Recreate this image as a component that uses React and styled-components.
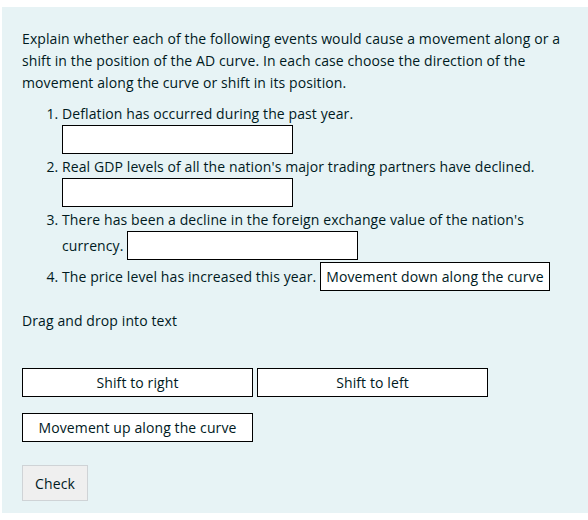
import React from 'react';
import styled, { createGlobalStyle } from 'styled-components';

const GlobalStyle = createGlobalStyle`
  html, body {
    margin: 0;
    padding: 0;
    background: #ffffff;
  }
  body {
    font-family: 'Open Sans', 'Noto Sans', sans-serif;
  }
`;

const Formulation = styled.div`
  margin: 7px 0 0 2px;
  padding: 21px 20px 12px 20px;
  background: #e7f3f5;
  color: #001a1e;
  font-size: 14px;
  line-height: 22px;
  letter-spacing: 0.1px;
`;

const Prompt = styled.p`
  margin: 0;
`;

const Events = styled.ol`
  margin: 9px 0 0 0;
  padding-left: 40px;
`;

const Event = styled.li`
  margin-bottom: 2px;
`;

/* overflow keeps the baseline at the bottom edge, filled or empty */
const DropBox = styled.span`
  display: inline-block;
  box-sizing: border-box;
  vertical-align: -9px;
  overflow: hidden;
  width: ${p => (p.filled ? 'auto' : '231px')};
  height: 29px;
  padding: 0 5px;
  margin-left: ${p => (p.inline ? '4px' : '0')};
  border: 1px solid #000;
  background: #fff;
  line-height: 27px;
  white-space: nowrap;
`;

const Hint = styled.p`
  margin: 19px 0 0 0;
`;

const Choices = styled.div`
  display: flex;
  flex-wrap: wrap;
  column-gap: 4px;
  row-gap: 16px;
  width: 470px;
  margin-top: 36px;
`;

const Choice = styled.div`
  box-sizing: border-box;
  width: 231px;
  height: 29px;
  border: 1px solid #000;
  background: #fff;
  text-align: center;
  line-height: 27px;
`;

const CheckButton = styled.button`
  display: block;
  margin-top: 23px;
  box-sizing: border-box;
  width: 66px;
  height: 36px;
  border: 1px solid #cfd3d6;
  border-radius: 0;
  background: #efefef;
  color: #001a1e;
  font-family: inherit;
  font-size: 14px;
  letter-spacing: 0.1px;
  padding: 0;
`;

export default function App() {
  return (
    <>
      <GlobalStyle />
      <Formulation>
        <Prompt>
          Explain whether each of the following events would cause a movement along or a shift in the
          position of the AD curve. In each case choose the direction of the movement along the curve or
          shift in its position.
        </Prompt>
        <Events>
          <Event>
            Deflation has occurred during the past year. <DropBox />
          </Event>
          <Event>
            Real GDP levels of all the nation's major trading partners have declined. <DropBox />
          </Event>
          <Event>
            There has been a decline in the foreign exchange value of the nation's currency.
            <DropBox inline />
          </Event>
          <Event>
            The price level has increased this year.
            <DropBox inline filled>Movement down along the curve</DropBox>
          </Event>
        </Events>
        <Hint>Drag and drop into text</Hint>
        <Choices>
          <Choice>Shift to right</Choice>
          <Choice>Shift to left</Choice>
          <Choice>Movement up along the curve</Choice>
        </Choices>
        <CheckButton>Check</CheckButton>
      </Formulation>
    </>
  );
}
